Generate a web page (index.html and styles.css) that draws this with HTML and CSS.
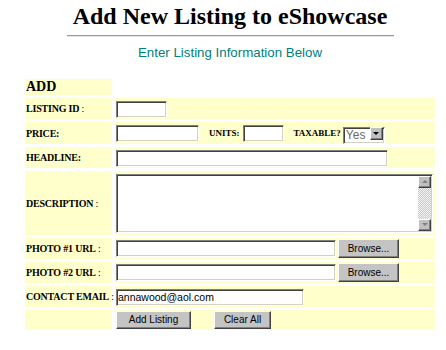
FILE: index.html
```html
<!DOCTYPE html>
<html>
<head>
<meta charset="utf-8">
<title>Add New Listing to eShowcase</title>
<link rel="stylesheet" href="styles.css">
</head>
<body>
<div class="header">
  <h1 class="title">Add New Listing to eShowcase</h1>
  <hr class="rule">
  <p class="subtitle">Enter Listing Information Below</p>
</div>
<form class="form">
<table class="listing">
  <tr class="r16">
    <td class="label add">ADD</td>
    <td class="empty"></td>
  </tr>
  <tr class="r21">
    <td class="label"><b>LISTING ID</b> :</td>
    <td class="value"><input class="field w-id" type="text"></td>
  </tr>
  <tr class="r22">
    <td class="label"><b>PRICE:</b></td>
    <td class="value">
      <div class="inline">
        <input class="field w-price" type="text">
        <b class="sublabel units">UNITS:</b>
        <input class="field w-units" type="text">
        <b class="sublabel taxable">TAXABLE?</b>
        <span class="selectbox">
          <select class="select"><option>Yes</option><option>No</option></select>
          <span class="select-btn"><span class="tri"></span></span>
        </span>
      </div>
    </td>
  </tr>
  <tr class="r21">
    <td class="label"><b>HEADLINE:</b></td>
    <td class="value"><input class="field w-head" type="text"></td>
  </tr>
  <tr class="r64">
    <td class="label"><b>DESCRIPTION</b> :</td>
    <td class="value">
      <span class="areabox">
        <textarea class="area"></textarea>
        <span class="vscroll">
          <span class="sbtn"><span class="tri-up"></span></span>
          <span class="track"></span>
          <span class="sbtn"><span class="tri-down"></span></span>
        </span>
      </span>
    </td>
  </tr>
  <tr class="r21">
    <td class="label"><b>PHOTO #1 URL</b> :</td>
    <td class="value"><div class="inline"><input class="field w-url" type="text"><button type="button" class="btn browse">Browse...</button></div></td>
  </tr>
  <tr class="r21">
    <td class="label"><b>PHOTO #2 URL</b> :</td>
    <td class="value"><div class="inline"><input class="field w-url" type="text"><button type="button" class="btn browse">Browse...</button></div></td>
  </tr>
  <tr class="r21">
    <td class="label"><b>CONTACT EMAIL</b> :</td>
    <td class="value"><input class="field w-mail" type="text" value="annawood@aol.com"></td>
  </tr>
  <tr class="r20">
    <td class="label"></td>
    <td class="value"><div class="inline"><button type="button" class="btn add-btn">Add Listing</button><button type="button" class="btn clear-btn">Clear All</button></div></td>
  </tr>
</table>
</form>
</body>
</html>
```

FILE: styles.css
```css
html, body {
  margin: 0;
  padding: 0;
  background: #ffffff;
}
body {
  font-family: "Liberation Serif", "Times New Roman", serif;
  color: #000;
  width: 446px;
  overflow: hidden;
}
.header {
  padding: 2px 0 0 14px;
  text-align: center;
}
.title {
  margin: 0;
  font-size: 24px;
  line-height: 28px;
  font-weight: bold;
}
.rule {
  width: 327px;
  margin: 5px auto 0;
  border: 0;
  border-top: 1px solid #9a9a9a;
  border-bottom: 1px solid #e4e4e4;
  height: 0;
}
.subtitle {
  margin: 8px 0 0;
  font-family: "Liberation Sans", Arial, sans-serif;
  font-size: 13.3px;
  line-height: 15px;
  color: #008080;
}
.form {
  margin: 16px 0 0 22px;
}
.listing {
  border-collapse: separate;
  border-spacing: 3px;
  table-layout: fixed;
  width: 416px;
}
.listing td {
  padding: 0 0 0 1px;
  vertical-align: middle;
}
.label {
  width: 86px;
  background: #ffffcc;
  font-size: 10px;
  letter-spacing: -0.2px;
  white-space: nowrap;
}
.label.add {
  font-size: 14px;
  font-weight: bold;
  line-height: 16px;
  letter-spacing: 0;
}
.value {
  width: 319px;
  background: #ffffcc;
}
.empty {
  background: transparent;
}
.r16 { height: 16px; }
.r20 { height: 20px; }
.r21 { height: 21px; }
.r22 { height: 22px; }
.r64 { height: 64px; }

.inline {
  display: flex;
  align-items: center;
}
.field {
  box-sizing: border-box;
  height: 17px;
  margin: 0;
  padding: 0 1px;
  font-family: "Liberation Sans", Arial, sans-serif;
  font-size: 10.5px;
  color: #000;
  background: #fff;
  border: 1px solid;
  border-color: #808080 #ffffff #ffffff #808080;
  box-shadow: inset 1px 1px 0 #404040, inset -1px -1px 0 #d4d0c8;
  outline: none;
  vertical-align: middle;
}
.w-id { width: 51px; }
.w-price { width: 83px; }
.w-units { width: 41px; }
.w-head { width: 272px; }
.w-url { width: 220px; }
.w-mail { width: 188px; }

.sublabel {
  font-size: 9px;
  white-space: nowrap;
}
.units { margin: 0 3px 0 10px; }
.taxable { margin: 0 2px 0 10px; }

.selectbox {
  position: relative;
  display: inline-block;
  width: 42px;
  height: 17px;
}
.select {
  appearance: none;
  -webkit-appearance: none;
  box-sizing: border-box;
  width: 42px;
  height: 17px;
  margin: 0;
  padding: 0 0 0 2px;
  font-family: "Liberation Sans", Arial, sans-serif;
  font-size: 12px;
  line-height: 13px;
  color: #6a6a6a;
  background: #fff;
  border: 1px solid;
  border-color: #808080 #ffffff #ffffff #808080;
  box-shadow: inset 1px 1px 0 #404040, inset -1px -1px 0 #d4d0c8;
  border-radius: 0;
  outline: none;
}
.select-btn {
  position: absolute;
  top: 2px;
  right: 2px;
  box-sizing: border-box;
  width: 13px;
  height: 13px;
  background: #c0c0c0;
  border: 1px solid;
  border-color: #ffffff #404040 #404040 #ffffff;
  box-shadow: inset -1px -1px 0 #808080;
  display: flex;
  align-items: center;
  justify-content: center;
  pointer-events: none;
}
.tri {
  width: 0;
  height: 0;
  border-left: 3px solid transparent;
  border-right: 3px solid transparent;
  border-top: 3px solid #000;
}

.areabox {
  position: relative;
  display: inline-block;
  vertical-align: middle;
  width: 317px;
  height: 59px;
}
.area {
  box-sizing: border-box;
  display: block;
  width: 317px;
  height: 59px;
  margin: 0;
  padding: 1px 16px 1px 2px;
  resize: none;
  overflow: hidden;
  font-family: "Liberation Sans", Arial, sans-serif;
  font-size: 11px;
  background: #fff;
  border: 1px solid;
  border-color: #808080 #ffffff #ffffff #808080;
  box-shadow: inset 1px 1px 0 #404040, inset -1px -1px 0 #d4d0c8;
  outline: none;
}
.vscroll {
  position: absolute;
  top: 2px;
  right: 2px;
  bottom: 2px;
  width: 13px;
  display: flex;
  flex-direction: column;
  pointer-events: none;
}
.sbtn {
  box-sizing: border-box;
  flex: 0 0 12px;
  height: 12px;
  background: #c0c0c0;
  border: 1px solid;
  border-color: #ffffff #404040 #404040 #ffffff;
  box-shadow: inset -1px -1px 0 #808080;
  display: flex;
  align-items: center;
  justify-content: center;
}
.track {
  flex: 1;
  background: repeating-conic-gradient(#c8c8c8 0 25%, #f4f4f4 0 50%) 0 0 / 2px 2px;
}
.tri-up {
  width: 0;
  height: 0;
  border-left: 3px solid transparent;
  border-right: 3px solid transparent;
  border-bottom: 3px solid #808080;
}
.tri-down {
  width: 0;
  height: 0;
  border-left: 3px solid transparent;
  border-right: 3px solid transparent;
  border-top: 3px solid #808080;
}

.btn {
  box-sizing: border-box;
  margin: 0;
  padding: 0;
  font-family: "Liberation Sans", Arial, sans-serif;
  font-size: 10px;
  line-height: 14px;
  color: #000;
  background: #c4c4c4;
  border: 1px solid;
  border-color: #ffffff #404040 #404040 #ffffff;
  box-shadow: inset -1px -1px 0 #808080;
  border-radius: 0;
}
.browse {
  width: 61px;
  height: 19px;
  margin-left: 2px;
}
.add-btn {
  width: 75px;
  height: 18px;
}
.clear-btn {
  width: 57px;
  height: 18px;
  margin-left: 23px;
}
```
